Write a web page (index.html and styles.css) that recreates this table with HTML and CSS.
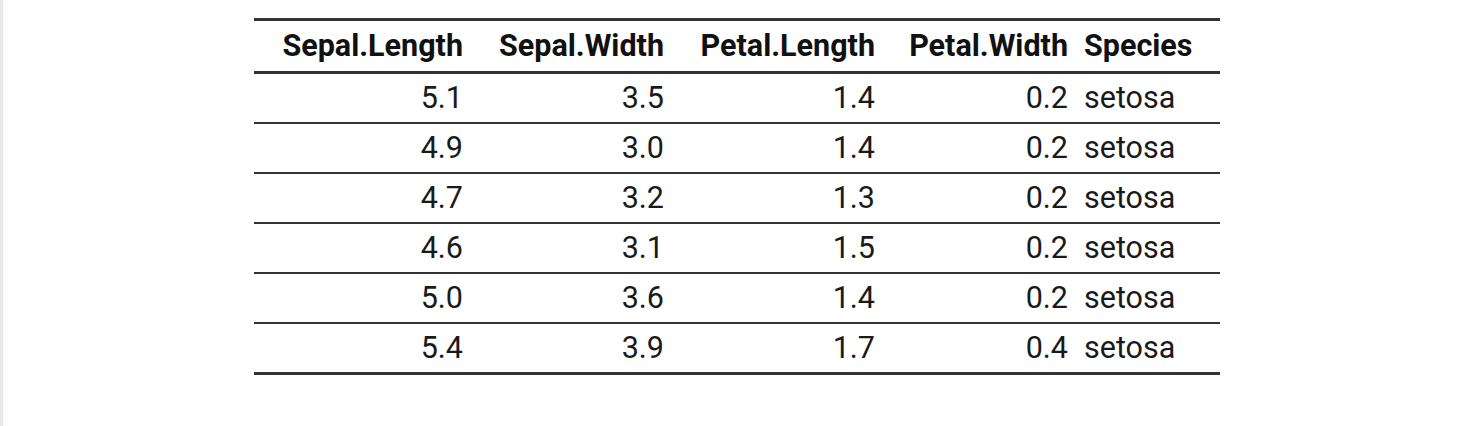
FILE: index.html
```html
<!DOCTYPE html>
<html>
<head>
<meta charset="utf-8">
<link rel="stylesheet" href="styles.css">
</head>
<body>
<div class="page">
  <table class="iris">
    <colgroup>
      <col class="c1"><col class="c2"><col class="c3"><col class="c4"><col class="c5">
    </colgroup>
    <thead>
      <tr>
        <th class="num">Sepal.Length</th>
        <th class="num">Sepal.Width</th>
        <th class="num">Petal.Length</th>
        <th class="num">Petal.Width</th>
        <th class="txt">Species</th>
      </tr>
    </thead>
    <tbody>
      <tr><td class="num">5.1</td><td class="num">3.5</td><td class="num">1.4</td><td class="num">0.2</td><td class="txt">setosa</td></tr>
      <tr><td class="num">4.9</td><td class="num">3.0</td><td class="num">1.4</td><td class="num">0.2</td><td class="txt">setosa</td></tr>
      <tr><td class="num">4.7</td><td class="num">3.2</td><td class="num">1.3</td><td class="num">0.2</td><td class="txt">setosa</td></tr>
      <tr><td class="num">4.6</td><td class="num">3.1</td><td class="num">1.5</td><td class="num">0.2</td><td class="txt">setosa</td></tr>
      <tr><td class="num">5.0</td><td class="num">3.6</td><td class="num">1.4</td><td class="num">0.2</td><td class="txt">setosa</td></tr>
      <tr><td class="num">5.4</td><td class="num">3.9</td><td class="num">1.7</td><td class="num">0.4</td><td class="txt">setosa</td></tr>
    </tbody>
  </table>
</div>
</body>
</html>
```

FILE: styles.css
```css
html, body {
  margin: 0;
  padding: 0;
  background: #ffffff;
}
.page {
  box-sizing: border-box;
  height: 426px;
  border-left: 3px solid #e6e8eb;
  padding: 18px 0 0 251px;
  font-family: Roboto, "Liberation Sans", sans-serif;
  color: #1a1a1a;
}
.iris {
  border-collapse: collapse;
  table-layout: fixed;
  width: 966px;
  font-size: 30.5px;
  border-top: 3px solid #333333;
  border-bottom: 3px solid #333333;
}
.c1 { width: 217px; }
.c2 { width: 201px; }
.c3 { width: 211px; }
.c4 { width: 193px; }
.c5 { width: 144px; }
.iris th, .iris td {
  padding: 0 8px;
  white-space: nowrap;
  line-height: 34px;
}
.iris th {
  height: 50px;
  font-weight: 700;
  color: #111111;
  border-bottom: 3px solid #333333;
}
.iris td {
  height: 48px;
  font-weight: 400;
  border-bottom: 2px solid #333333;
}
.iris tbody tr:last-child td {
  border-bottom: none;
}
.num { text-align: right; }
.txt { text-align: left; }
```
